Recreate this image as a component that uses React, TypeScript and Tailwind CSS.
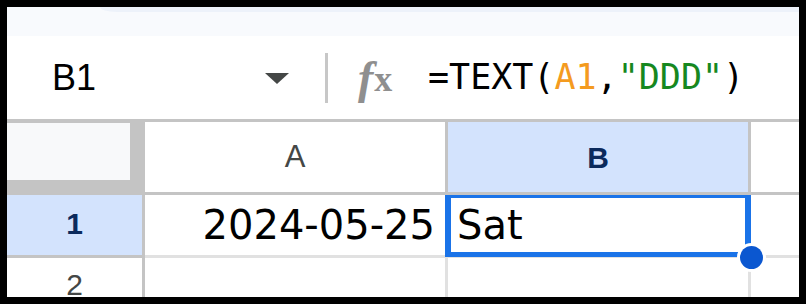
import React from "react";

export default function App() {
  const sans = { fontFamily: '"Liberation Sans", Arial, sans-serif' };
  const dv = { fontFamily: '"DejaVu Sans", Verdana, sans-serif' };
  const mono = { fontFamily: '"DejaVu Sans Mono", monospace' };
  return (
    <div className="w-[806px] h-[304px] bg-black p-[7px]">
      <div className="relative w-[792px] h-[290px] bg-white overflow-hidden flex flex-col">
        {/* top band */}
        <div className="h-[29px] shrink-0 bg-[#f8fafd] flex flex-col">
          <div className="h-[5px] flex">
            <div className="w-[93px]" />
            <div className="flex-1 bg-[#edf2fa] rounded-bl-[17px_5px]" />
          </div>
        </div>
        {/* toolbar */}
        <div className="h-[83px] shrink-0 flex items-center pl-[45px]">
          <span className="w-[213px] text-[36px] leading-none text-black" style={sans}>
            B1
          </span>
          <svg width="24" height="12" viewBox="0 0 24 12" className="mt-[2px]">
            <polygon points="0,0 24,0 12,11" fill="#444746" />
          </svg>
          <div className="ml-[36px] w-[3px] h-[50px] bg-[#c7c7c7]" />
          <div
            className="ml-[30px] w-[40px] flex items-end text-[#8f8f8f] leading-none font-bold"
            style={{ fontFamily: '"Liberation Serif", "DejaVu Serif", serif' }}
          >
            <span className="italic text-[46px]">f</span>
            <span className="text-[36px] ml-[1px] mb-[4px]">x</span>
          </div>
          <div className="ml-[30px] text-[35px] leading-none text-black whitespace-pre" style={mono}>
            =TEXT(<span className="text-[#f49b1f]">A1</span>,<span className="text-[#16881f]">"DDD"</span>)
          </div>
        </div>
        {/* grid top line */}
        <div className="h-[3px] shrink-0 bg-[#c4c4c4]" />
        {/* header row */}
        <div className="h-[73px] shrink-0 flex border-b-[3px] border-[#c4c4c4]">
          <div className="w-[138px] border-r-[3px] border-[#c4c4c4] bg-[#c4c4c4]">
            <div className="w-[123px] h-[57px] mt-px bg-[#f8f9fa]" />
          </div>
          <div
            className="w-[303px] border-r-[3px] border-[#c4c4c4] flex items-center justify-center text-[31px] text-[#444746]"
            style={sans}
          >
            A
          </div>
          <div
            className="w-[303px] border-r-[3px] border-[#c4c4c4] bg-[#d3e3fd] flex items-center justify-center text-[30px] font-bold text-[#0b2a5c]"
            style={sans}
          >
            B
          </div>
          <div className="flex-1" />
        </div>
        {/* row 1 */}
        <div className="h-[63px] flex shrink-0">
          <div
            className="w-[138px] border-r-[3px] border-b-[3px] border-[#c4c4c4] bg-[#d3e3fd] flex items-center justify-center pb-[4px] text-[30px] font-bold text-[#0b2a5c]"
            style={sans}
          >
            1
          </div>
          <div
            className="w-[303px] border-r-[3px] border-b-[3px] border-[#e1e1e1] flex items-center justify-end pr-[10px] text-[40px] text-black"
            style={dv}
          >
            2024-05-25
          </div>
          <div
            className="w-[303px] border-r-[3px] border-b-[3px] border-[#e1e1e1] flex items-center pl-[9px] text-[40px] text-black"
            style={dv}
          >
            Sat
          </div>
          <div className="flex-1 border-b-[3px] border-[#e1e1e1]" />
        </div>
        {/* row 2 */}
        <div className="h-[60px] flex shrink-0">
          <div
            className="w-[138px] border-r-[3px] border-[#c4c4c4] flex items-center justify-center pb-[8px] text-[30px] text-[#444746]"
            style={sans}
          >
            2
          </div>
          <div className="w-[303px] border-r-[3px] border-[#e1e1e1]" />
          <div className="w-[303px] border-r-[3px] border-[#e1e1e1]" />
          <div className="flex-1" />
        </div>
        {/* selection */}
        <div className="absolute left-[438px] top-[188px] w-[306px] h-[62px] border-[#1a73e8] border-t-[3px] border-l-[6px] border-r-[6px] border-b-[5px]" />
        <div className="absolute left-[730px] top-[236px] w-[29px] h-[29px] rounded-full bg-white flex items-center justify-center">
          <div className="w-[23px] h-[23px] rounded-full bg-[#0b57d0]" />
        </div>
      </div>
    </div>
  );
}
